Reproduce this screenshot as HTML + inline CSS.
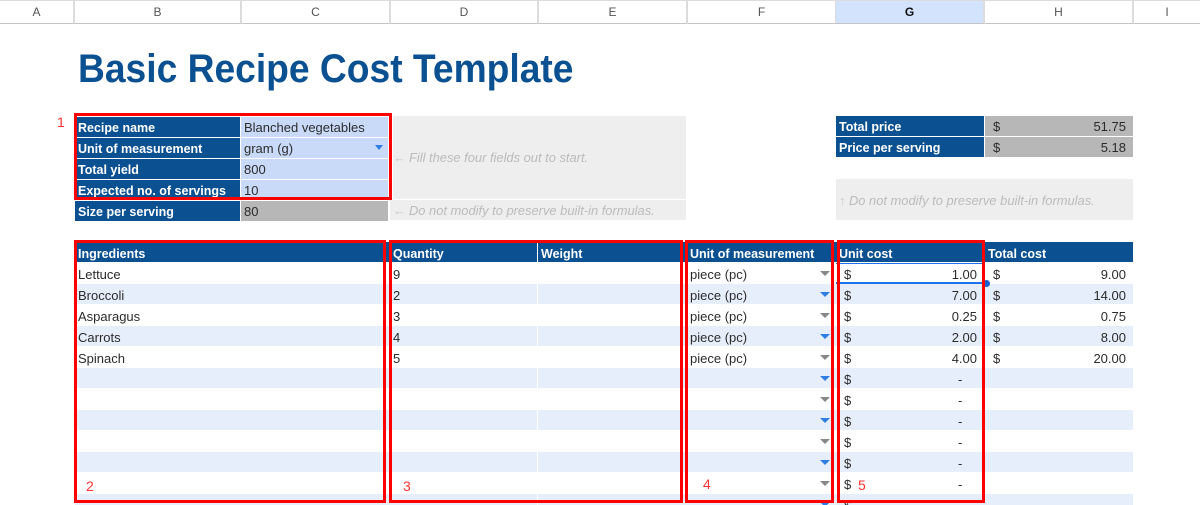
<!DOCTYPE html>
<html><head><meta charset="utf-8"><style>
html,body{margin:0;padding:0;background:#fff}
#p{position:relative;width:1200px;height:505px;overflow:hidden;background:#fff;font:13px/22px "Liberation Sans",sans-serif;color:#2b2b2b}
#p div{position:absolute;white-space:nowrap}
.h{top:1px;height:22px;border-right:2px solid #dcdcdc;border-bottom:1px solid #c4c4c4;box-sizing:content-box;text-align:center;font-size:12px;line-height:22px;color:#555;background:#fff}
.n{background:#0b5091;color:#fff;font-weight:bold;padding-left:3px;box-sizing:border-box;height:20px;font-size:12.5px}
.b{background:#c9daf8}.g{background:#b7b7b7}.s{background:#e7eefb}
.t{padding-left:3px;box-sizing:border-box}
.note{background:#eee;color:#bbb;font-style:italic;font-size:12.9px;box-sizing:border-box}
.note span{display:inline-block;font-family:"Liberation Sans",sans-serif;font-style:normal;color:#c8c8c8}
.r{border:3px solid #f00;box-sizing:border-box}
.a{width:0;height:0;border-left:5px solid transparent;border-right:5px solid transparent;border-top:5px solid #888}
.ab{border-top-color:#2f7de1}
#p .red{color:#f33;font-size:14px;line-height:20px}
.rt{text-align:right}
</style></head><body><div id="p">
<div style="left:0;top:0;width:1200px;height:1px;background:#dcdcdc"></div>
<div class="h" style="left:0;width:73px">A</div><div class="h" style="left:75px;width:165px">B</div><div class="h" style="left:242px;width:147px">C</div><div class="h" style="left:391px;width:146px">D</div><div class="h" style="left:539px;width:147px">E</div><div class="h" style="left:688px;width:147px">F</div><div class="h" style="left:836px;width:147px;background:#d3e3fd;color:#111;font-weight:bold">G</div><div class="h" style="left:985px;width:147px">H</div><div class="h" style="left:1134px;width:66px">I</div>

<div style="left:78px;top:46px;font-size:40px;line-height:46px;font-weight:bold;color:#0b5091;transform:scaleX(.93);transform-origin:0 0">Basic Recipe Cost Template</div>

<div class="n" style="left:75px;top:117px;width:165px">Recipe name</div><div class="b t" style="left:241px;top:117px;width:147px;height:20px">Blanched vegetables</div>
<div class="n" style="left:75px;top:138px;width:165px">Unit of measurement</div><div class="b t" style="left:241px;top:138px;width:147px;height:20px">gram (g)</div>
<div class="a ab" style="left:375px;top:145px;border-left-width:4px;border-right-width:4px"></div>
<div class="n" style="left:75px;top:159px;width:165px">Total yield</div><div class="b t" style="left:241px;top:159px;width:147px;height:20px">800</div>
<div class="n" style="left:75px;top:180px;width:165px">Expected no. of servings</div><div class="b t" style="left:241px;top:180px;width:147px;height:20px">10</div>
<div class="n" style="left:75px;top:201px;width:165px">Size per serving</div><div class="g t" style="left:241px;top:201px;width:147px;height:20px">80</div>

<div class="note" style="left:393px;top:116px;width:293px;height:83px;line-height:84px"><span style="width:16px">←</span>Fill these four fields out to start.</div>
<div class="note" style="left:390px;top:200px;width:296px;height:20px;padding-left:3px"><span style="width:16px">←</span>Do not modify to preserve built-in formulas.</div>

<div class="n" style="left:836px;top:116px;width:148px">Total price</div><div class="g" style="left:985px;top:116px;width:148px;height:20px;padding-left:8px;box-sizing:border-box">$</div><div class="rt" style="left:1040px;top:116px;width:86px">51.75</div>
<div class="n" style="left:836px;top:137px;width:148px">Price per serving</div><div class="g" style="left:985px;top:137px;width:148px;height:20px;padding-left:8px;box-sizing:border-box">$</div><div class="rt" style="left:1040px;top:137px;width:86px">5.18</div>
<div class="note" style="left:836px;top:179px;width:297px;height:41px;line-height:43px;padding-left:3px"><span style="width:10px">↑</span>Do not modify to preserve built-in formulas.</div>

<div class="s" style="left:75px;top:284px;width:1058px;height:20px"></div>
<div class="s" style="left:75px;top:326px;width:1058px;height:20px"></div>
<div class="s" style="left:75px;top:368px;width:1058px;height:20px"></div>
<div class="s" style="left:75px;top:410px;width:1058px;height:20px"></div>
<div class="s" style="left:75px;top:452px;width:1058px;height:20px"></div>
<div class="s" style="left:75px;top:494px;width:1058px;height:11px"></div>
<div style="left:537px;top:264px;width:1px;height:241px;background:#fff"></div>

<div style="left:75px;top:242px;width:1058px;height:20px;background:#0b5091"></div>
<div style="left:537px;top:242px;width:1px;height:20px;background:#fff"></div>
<div class="n" style="left:75px;top:243px;background:none">Ingredients</div>
<div class="n" style="left:390px;top:243px;background:none">Quantity</div>
<div class="n" style="left:538px;top:243px;background:none">Weight</div>
<div class="n" style="left:687px;top:243px;background:none">Unit of measurement</div>
<div class="n" style="left:836px;top:243px;background:none">Unit cost</div>
<div class="n" style="left:985px;top:243px;background:none">Total cost</div>

<div style="left:78px;top:264px">Lettuce</div><div style="left:78px;top:285px">Broccoli</div><div style="left:78px;top:306px">Asparagus</div><div style="left:78px;top:327px">Carrots</div><div style="left:78px;top:348px">Spinach</div>
<div style="left:393px;top:264px">9</div><div style="left:393px;top:285px">2</div><div style="left:393px;top:306px">3</div><div style="left:393px;top:327px">4</div><div style="left:393px;top:348px">5</div>
<div style="left:690px;top:264px">piece (pc)</div><div style="left:690px;top:285px">piece (pc)</div><div style="left:690px;top:306px">piece (pc)</div><div style="left:690px;top:327px">piece (pc)</div><div style="left:690px;top:348px">piece (pc)</div>

<div class="a" style="left:820px;top:271px"></div><div class="a ab" style="left:820px;top:292px"></div><div class="a" style="left:820px;top:313px"></div><div class="a ab" style="left:820px;top:334px"></div><div class="a" style="left:820px;top:355px"></div><div class="a ab" style="left:820px;top:376px"></div><div class="a" style="left:820px;top:397px"></div><div class="a ab" style="left:820px;top:418px"></div><div class="a" style="left:820px;top:439px"></div><div class="a ab" style="left:820px;top:460px"></div><div class="a" style="left:820px;top:481px"></div><div class="a ab" style="left:820px;top:502px"></div>

<div style="left:844px;top:264px">$</div><div class="rt" style="left:900px;top:264px;width:77px">1.00</div>
<div style="left:844px;top:285px">$</div><div class="rt" style="left:900px;top:285px;width:77px">7.00</div>
<div style="left:844px;top:306px">$</div><div class="rt" style="left:900px;top:306px;width:77px">0.25</div>
<div style="left:844px;top:327px">$</div><div class="rt" style="left:900px;top:327px;width:77px">2.00</div>
<div style="left:844px;top:348px">$</div><div class="rt" style="left:900px;top:348px;width:77px">4.00</div>
<div style="left:844px;top:369px">$</div><div style="left:958px;top:369px">-</div>
<div style="left:844px;top:390px">$</div><div style="left:958px;top:390px">-</div>
<div style="left:844px;top:411px">$</div><div style="left:958px;top:411px">-</div>
<div style="left:844px;top:432px">$</div><div style="left:958px;top:432px">-</div>
<div style="left:844px;top:453px">$</div><div style="left:958px;top:453px">-</div>
<div style="left:844px;top:474px">$</div><div style="left:958px;top:474px">-</div>
<div style="left:844px;top:495px">$</div>

<div style="left:993px;top:264px">$</div><div class="rt" style="left:1040px;top:264px;width:86px">9.00</div>
<div style="left:993px;top:285px">$</div><div class="rt" style="left:1040px;top:285px;width:86px">14.00</div>
<div style="left:993px;top:306px">$</div><div class="rt" style="left:1040px;top:306px;width:86px">0.75</div>
<div style="left:993px;top:327px">$</div><div class="rt" style="left:1040px;top:327px;width:86px">8.00</div>
<div style="left:993px;top:348px">$</div><div class="rt" style="left:1040px;top:348px;width:86px">20.00</div>

<div style="left:836px;top:263px;width:148px;height:1px;background:#1a73e8"></div>
<div style="left:836px;top:282px;width:148px;height:2px;background:#1a73e8"></div>
<div style="left:983px;top:280px;width:7px;height:7px;border-radius:50%;background:#1a5fd0"></div>

<div class="r" style="left:74px;top:113px;width:318px;height:87px"></div>
<div class="r" style="left:74px;top:240px;width:312px;height:263px"></div>
<div class="r" style="left:389px;top:240px;width:294px;height:263px"></div>
<div class="r" style="left:685px;top:240px;width:149px;height:263px"></div>
<div class="r" style="left:837px;top:240px;width:148px;height:263px"></div>

<div class="red" style="left:57px;top:112px">1</div>
<div class="red" style="left:86px;top:476px">2</div>
<div class="red" style="left:403px;top:476px">3</div>
<div class="red" style="left:703px;top:474px">4</div>
<div class="red" style="left:858px;top:475px">5</div>
</div></body></html>
